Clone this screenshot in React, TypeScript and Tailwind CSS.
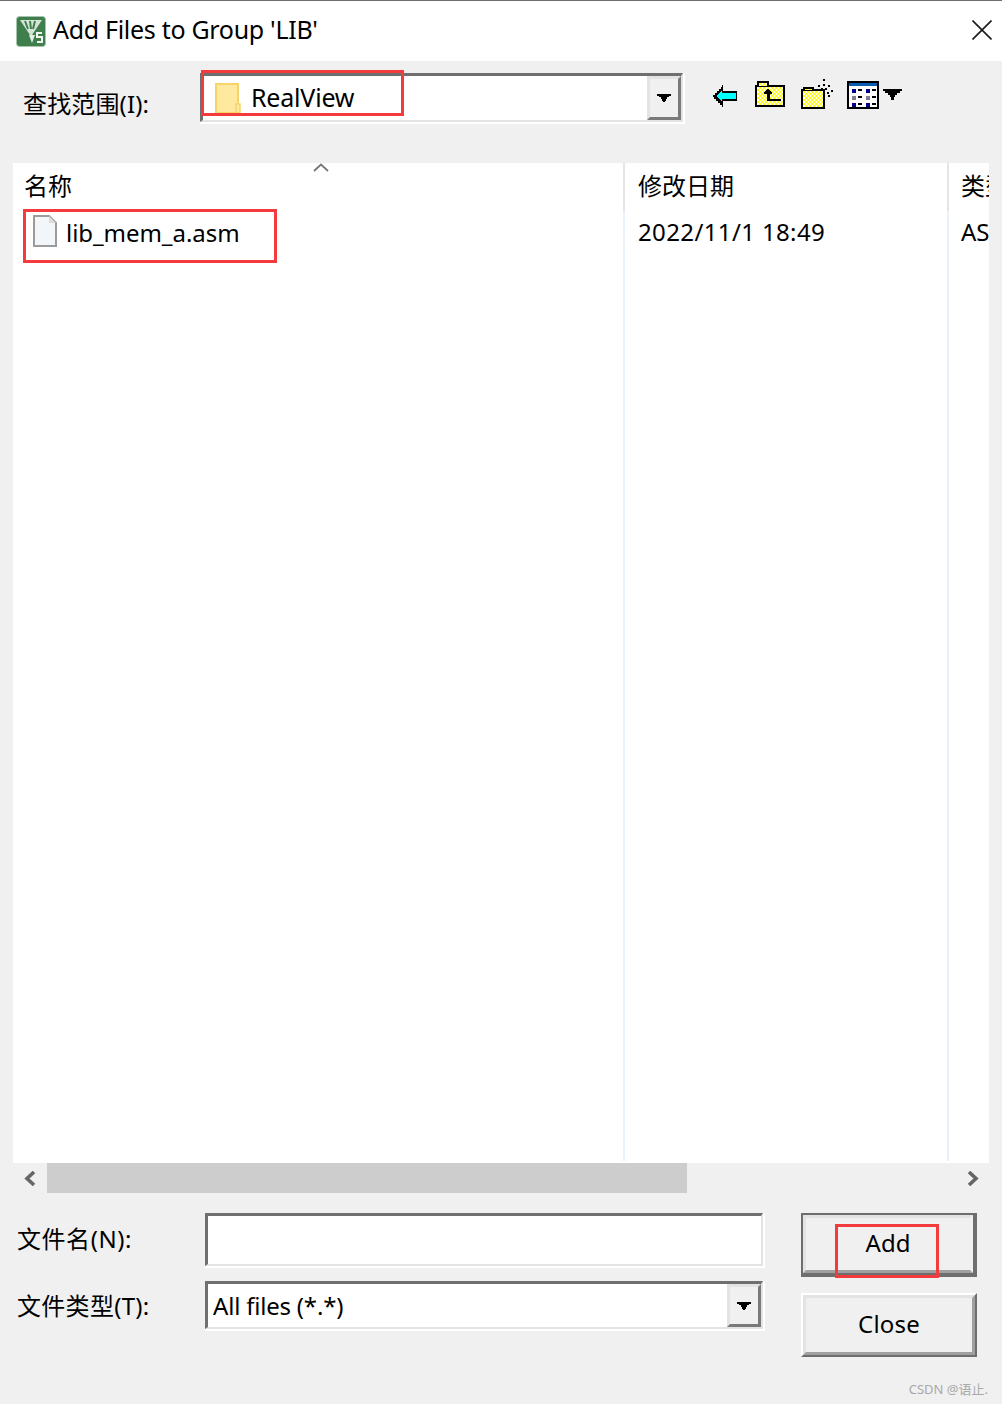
const font = "font-['Noto_Sans','Noto_Sans_CJK_SC',sans-serif]";

function AppLogo() {
  return (
    <svg width="30" height="31" viewBox="0 0 30 31" className="shrink-0">
      <rect x="0.5" y="0.5" width="29" height="30" rx="3" fill="#3f7f4c" stroke="#a9c4ae" />
      <path d="M4 4 H26 L16 19 H14 Z" fill="#d5e4d7" />
      <path d="M9 5 L12 13 M14 5 L15 13 M19 5 L17 13" stroke="#3f7f4c" strokeWidth="2" />
      <path d="M13 19 H19 L16 27 Z" fill="#e6efe7" />
      <path d="M26 17 H21 V21 H26 V26 H21" stroke="#f2f6f2" strokeWidth="2" fill="none" />
    </svg>
  );
}

function CloseIcon() {
  return (
    <svg width="20" height="20" viewBox="0 0 20 20">
      <path d="M0.5 0.5 L19.5 19.5 M19.5 0.5 L0.5 19.5" stroke="#1a1a1a" strokeWidth="1.6" />
    </svg>
  );
}

function ComboArrow() {
  return (
    <svg width="14" height="8" viewBox="0 0 14 8" shapeRendering="crispEdges">
      <path d="M0 0 H14 V2 H12 V3 H10 V5 H9 V7 H8 V8 H6 V7 H5 V5 H4 V3 H2 V2 H0 Z" fill="#000" />
    </svg>
  );
}

function CheckerDefs({ id }: { id: string }) {
  return (
    <defs>
      <pattern id={id} width="4" height="4" patternUnits="userSpaceOnUse">
        <rect width="4" height="4" fill="#ffff00" />
        <rect width="2" height="2" fill="#ffffff" />
        <rect x="2" y="2" width="2" height="2" fill="#ffffff" />
      </pattern>
    </defs>
  );
}

function BackIcon() {
  return (
    <svg width="25" height="22" viewBox="0 0 25 22" shapeRendering="crispEdges">
      <path d="M0 10 H2 V8 H4 V6 H6 V4 H8 V2 H9 V0 H10 V6 H24 V16 H10 V22 H9 V20 H7 V18 H5 V16 H3 V14 H1 V12 H0 Z" fill="#000" />
      <path d="M3 11 L9 6 V8 H23 V14 H9 V16 Z" fill="#00ffff" />
    </svg>
  );
}

function UpFolderIcon() {
  return (
    <svg width="30" height="26" viewBox="0 0 30 26" shapeRendering="crispEdges">
      <CheckerDefs id="up-check" />
      <path d="M1 5 H29 V25 H1 Z" fill="url(#up-check)" stroke="#000" strokeWidth="2" />
      <path d="M3 5 V1 H13 V5" fill="url(#up-check)" stroke="#000" strokeWidth="2" />
      <path d="M13 8 H14 V9 H15 V10 H16 V11 H17 V13 H15 V18 H26 V20 H12 V13 H9 V11 H10 V10 H11 V9 H12 V8 Z" fill="#000" />
    </svg>
  );
}

function NewFolderIcon() {
  return (
    <svg width="32" height="30" viewBox="0 0 32 30" shapeRendering="crispEdges">
      <CheckerDefs id="new-check" />
      <path d="M1 11 H23 V29 H1 Z" fill="url(#new-check)" stroke="#000" strokeWidth="2" />
      <path d="M3 11 V9 H12 V11" fill="url(#new-check)" stroke="#000" strokeWidth="2" />
      <path
        d="M22 0 H24 V2 H22 Z M22 5 H24 V7 H22 Z M17 6 H19 V8 H17 Z M27 6 H29 V8 H27 Z M20 9 H22 V11 H20 Z M24 9 H26 V11 H24 Z M22 11 H24 V13 H22 Z M30 11 H32 V13 H30 Z M26 13 H28 V15 H26 Z M27 16 H29 V18 H27 Z"
        fill="#000"
      />
    </svg>
  );
}

function ViewIcon() {
  const rows = [8, 15, 22];
  const cols = [5, 19];
  return (
    <svg width="32" height="28" viewBox="0 0 32 28" shapeRendering="crispEdges">
      <rect x="1" y="1" width="30" height="26" fill="#fff" stroke="#000" strokeWidth="2" />
      <rect x="2" y="2" width="28" height="3" fill="#0a5cb0" />
      {rows.map((y) =>
        cols.map((x) => (
          <g key={`${x}-${y}`}>
            <rect x={x} y={y} width="4" height="4" fill={y === 15 ? "#7f7f8f" : "#00008b"} />
            <rect x={x + 6} y={y} width="4" height="2" fill="#000" />
          </g>
        )),
      )}
    </svg>
  );
}

function FileIcon() {
  return (
    <svg width="24" height="32" viewBox="0 0 24 32" className="shrink-0">
      <path d="M1 1 H16 L23 8 V31 H1 Z" fill="#f3f6f8" stroke="#9b9b9b" strokeWidth="2" />
      <path d="M16 1 V8 H23 Z" fill="#dcdcdc" />
    </svg>
  );
}

function FolderIcon() {
  return (
    <svg width="26" height="30" viewBox="0 0 26 30" className="shrink-0">
      <path d="M1 1 H23 V30 H1 Z" fill="#ffe99f" stroke="#f6d468" strokeWidth="2" />
      <path d="M21 21 H25 V30 H21 Z" fill="#ffe99f" stroke="#f6d468" strokeWidth="1.5" />
    </svg>
  );
}

function Chevron({ right }: { right?: boolean }) {
  return (
    <svg width="12" height="15" viewBox="0 0 12 15">
      <path
        d={right ? "M2 1 L9 7.5 L2 14" : "M10 1 L3 7.5 L10 14"}
        fill="none"
        stroke="#666"
        strokeWidth="3.6"
      />
    </svg>
  );
}

function Column({
  width,
  pad,
  title,
  children,
  last,
}: {
  width: string;
  pad: string;
  title: string;
  children?: React.ReactNode;
  last?: boolean;
}) {
  return (
    <div className={`${width} flex flex-col overflow-hidden`}>
      <div className={`h-[48px] shrink-0 ${pad} flex items-center pb-[3px] text-[24px] whitespace-nowrap ${last ? "" : "border-r-2 border-[#e5e5e5]"}`}>
        {title}
      </div>
      <div className={`flex-1 mb-[2px] ${pad} whitespace-nowrap ${last ? "" : "border-r-2 border-[#e9f2fb]"}`}>
        {children}
      </div>
    </div>
  );
}

function Sunken({ className, children }: { className: string; children?: React.ReactNode }) {
  return (
    <div className={`${className} border-r-2 border-b-2 border-white`}>
      <div className="h-full border-t-[3px] border-l-[3px] border-t-[#6f6f6f] border-l-[#6f6f6f] border-r-2 border-b-2 border-r-[#e3e3e3] border-b-[#e3e3e3] bg-white flex items-center">
        {children}
      </div>
    </div>
  );
}

function DropButton({ className }: { className: string }) {
  return (
    <div className={`${className} shrink-0 flex items-center justify-center bg-[#f0f0f0] border-t-[3px] border-l-[3px] border-t-[#e3e3e3] border-l-[#e3e3e3] border-r-[3px] border-b-[3px] border-r-[#7a7a7a] border-b-[#7a7a7a]`}>
      <ComboArrow />
    </div>
  );
}

export default function App() {
  return (
    <div className={`${font} relative w-[1002px] h-[1404px] bg-[#f0f0f0] text-black flex flex-col overflow-hidden`}>
      {/* title bar */}
      <div className="h-[61px] shrink-0 bg-white border-t border-[#6e6e6e] flex items-center pl-[16px] pr-[10px]">
        <AppLogo />
        <span className="ml-[7px] mb-[2px] text-[25px] tracking-[-0.3px]">Add Files to Group 'LIB'</span>
        <button className="ml-auto mb-[3px]">
          <CloseIcon />
        </button>
      </div>

      {/* look-in row */}
      <div className="h-[102px] shrink-0 flex items-start pt-[12px] pl-[23px]">
        <span className="w-[177px] mt-[13px] text-[24px] leading-[36px] tracking-[0.15px]">查找范围(I):</span>
        <Sunken className="w-[485px] h-[51px]">
          <div className="flex-1 flex items-center pl-[12px] h-full">
            <FolderIcon />
            <span className="ml-[10px] text-[25px] tracking-[-0.2px]">RealView</span>
          </div>
          <DropButton className="w-[34px] h-full" />
        </Sunken>
        <div className="ml-[28px] mt-[12px]">
          <BackIcon />
        </div>
        <div className="ml-[17px] mt-[8px]">
          <UpFolderIcon />
        </div>
        <div className="ml-[16px] mt-[6px]">
          <NewFolderIcon />
        </div>
        <div className="ml-[14px] mt-[8px]">
          <ViewIcon />
        </div>
        <svg width="19" height="11" viewBox="0 0 19 11" className="ml-[4px] mt-[16px]" shapeRendering="crispEdges">
          <path d="M0 0 H19 V2 H17 V4 H14 V6 H12 V8 H11 V11 H8 V8 H7 V6 H5 V4 H2 V2 H0 Z" fill="#000" />
        </svg>
      </div>

      {/* file list */}
      <div className="relative h-[1000px] shrink-0 ml-[13px] w-[976px] bg-white flex">
        <svg width="16" height="9" viewBox="0 0 16 9" className="absolute left-[300px] top-0">
          <path d="M1 8 L8 1.5 L15 8" fill="none" stroke="#777" strokeWidth="1.8" />
        </svg>
        <Column width="w-[612px]" pad="pl-[11px]" title="名称">
          <div className="flex items-center h-[44px] pl-[9px] mt-[-2px]">
            <FileIcon />
            <span className="ml-[9px] pt-[4px] text-[24px] tracking-[-0.05px]">lib_mem_a.asm</span>
          </div>
        </Column>
        <Column width="w-[324px]" pad="pl-[13px]" title="修改日期">
          <div className="h-[44px] mt-[-1px] flex items-center text-[24px] tracking-[0.37px]">2022/11/1 18:49</div>
        </Column>
        <Column width="w-[40px]" pad="pl-[12px]" title="类型" last>
          <div className="h-[44px] mt-[-1px] flex items-center text-[24px]">ASM</div>
        </Column>
      </div>

      {/* horizontal scrollbar */}
      <div className="h-[30px] shrink-0 ml-[13px] w-[976px] flex items-center">
        <div className="w-[34px] flex justify-center">
          <Chevron />
        </div>
        <div className="w-[640px] h-full bg-[#cdcdcd]" />
        <div className="flex-1 flex justify-end pr-[10px]">
          <Chevron right />
        </div>
      </div>

      {/* bottom form */}
      <div className="flex pt-[20px] pl-[17px]">
        <div className="w-[748px]">
          <div className="flex items-center">
            <span className="w-[188px] pb-[4px] text-[24px] tracking-[0.55px]">文件名(N):</span>
            <Sunken className="w-[560px] h-[55px]" />
          </div>
          <div className="flex items-center mt-[13px]">
            <span className="w-[188px] text-[24px] tracking-[0.3px]">文件类型(T):</span>
            <Sunken className="w-[560px] h-[50px]">
              <span className="flex-1 pl-[5px] text-[24px] tracking-[-0.2px]">All files (*.*)</span>
              <DropButton className="w-[34px] h-full" />
            </Sunken>
          </div>
        </div>
        <div className="ml-[36px] w-[176px] flex flex-col gap-[16px]">
          <button className="h-[64px] bg-[#f0f0f0] border-[2px] border-r-[4px] border-b-[4px] border-[#6e6e6e] text-[24px]">
            <span className="h-full pb-[2px] flex items-center justify-center border-[3px] border-t-[#e3e3e3] border-l-[#e3e3e3] border-r-[#f0f0f0] border-b-[#a0a0a0]">
              Add
            </span>
          </button>
          <button className="h-[64px] bg-[#f0f0f0] border-[2px] border-t-white border-l-white border-r-[#6e6e6e] border-b-[#6e6e6e] text-[24px]">
            <span className="h-full pb-[2px] flex items-center justify-center tracking-[0.2px] border-[3px] border-t-[#e3e3e3] border-l-[#e3e3e3] border-r-[#a0a0a0] border-b-[#a0a0a0]">
              Close
            </span>
          </button>
        </div>
      </div>

      {/* watermark */}
      <div className="mt-[24px] pr-[14px] text-right text-[13px] leading-[16px] text-[#a9a9a9]">CSDN @语止.</div>

      {/* red annotation boxes */}
      <div className="absolute left-[201px] top-[70px] w-[203px] h-[46px] border-[3px] border-[#f33a3d]" />
      <div className="absolute left-[23px] top-[209px] w-[254px] h-[54px] border-[3px] border-[#f33a3d]" />
      <div className="absolute left-[835px] top-[1224px] w-[104px] h-[54px] border-[3px] border-[#f33a3d]" />
    </div>
  );
}
